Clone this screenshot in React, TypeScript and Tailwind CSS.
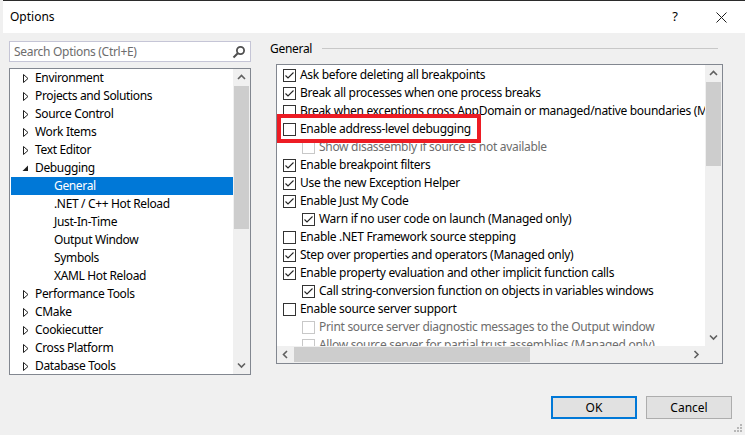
import React from "react";

const FONT = { fontFamily: '"Noto Sans", "Liberation Sans", sans-serif' };

type TreeItem = { label: string; level: 0 | 1; arrow?: "closed" | "open"; selected?: boolean };

const TREE: TreeItem[] = [
  { label: "Environment", level: 0, arrow: "closed" },
  { label: "Projects and Solutions", level: 0, arrow: "closed" },
  { label: "Source Control", level: 0, arrow: "closed" },
  { label: "Work Items", level: 0, arrow: "closed" },
  { label: "Text Editor", level: 0, arrow: "closed" },
  { label: "Debugging", level: 0, arrow: "open" },
  { label: "General", level: 1, selected: true },
  { label: ".NET / C++ Hot Reload", level: 1 },
  { label: "Just-In-Time", level: 1 },
  { label: "Output Window", level: 1 },
  { label: "Symbols", level: 1 },
  { label: "XAML Hot Reload", level: 1 },
  { label: "Performance Tools", level: 0, arrow: "closed" },
  { label: "CMake", level: 0, arrow: "closed" },
  { label: "Cookiecutter", level: 0, arrow: "closed" },
  { label: "Cross Platform", level: 0, arrow: "closed" },
  { label: "Database Tools", level: 0, arrow: "closed" },
];

type Opt = { label: string; checked: boolean; indent?: boolean; disabled?: boolean };

const OPTIONS: Opt[] = [
  { label: "Ask before deleting all breakpoints", checked: true },
  { label: "Break all processes when one process breaks", checked: true },
  { label: "Break when exceptions cross AppDomain or managed/native boundaries (Managed only)", checked: false },
  { label: "Enable address-level debugging", checked: false },
  { label: "Show disassembly if source is not available", checked: false, indent: true, disabled: true },
  { label: "Enable breakpoint filters", checked: true },
  { label: "Use the new Exception Helper", checked: true },
  { label: "Enable Just My Code", checked: true },
  { label: "Warn if no user code on launch (Managed only)", checked: true, indent: true },
  { label: "Enable .NET Framework source stepping", checked: false },
  { label: "Step over properties and operators (Managed only)", checked: true },
  { label: "Enable property evaluation and other implicit function calls", checked: true },
  { label: "Call string-conversion function on objects in variables windows", checked: true, indent: true },
  { label: "Enable source server support", checked: false },
  { label: "Print source server diagnostic messages to the Output window", checked: false, indent: true, disabled: true },
  { label: "Allow source server for partial trust assemblies (Managed only)", checked: false, indent: true, disabled: true },
];

function Chevron({ dir }: { dir: "up" | "down" | "left" | "right" }) {
  const pts = {
    up: "1,5 4.5,1.5 8,5",
    down: "1,1.5 4.5,5 8,1.5",
    left: "5,1 1.5,4.5 5,8",
    right: "1.5,1 5,4.5 1.5,8",
  }[dir];
  const size = dir === "up" || dir === "down" ? { w: 9, h: 7 } : { w: 7, h: 9 };
  return (
    <svg width={size.w} height={size.h} viewBox={`0 0 ${size.w} ${size.h}`}>
      <polyline points={pts} fill="none" stroke="#606060" strokeWidth="1.6" />
    </svg>
  );
}

function TreeArrow({ kind }: { kind: "closed" | "open" }) {
  if (kind === "open") {
    return (
      <svg width="7" height="7" viewBox="0 0 7 7">
        <polygon points="6,0.5 6,6 0.5,6" fill="#1e1e1e" />
      </svg>
    );
  }
  return (
    <svg width="6" height="9" viewBox="0 0 6 9">
      <polygon points="0.5,0.5 5,4.5 0.5,8.5" fill="none" stroke="#1e1e1e" strokeWidth="1" />
    </svg>
  );
}

function CheckBox({ checked, disabled }: { checked: boolean; disabled?: boolean }) {
  return (
    <div
      className={`w-[13px] h-[13px] shrink-0 bg-white border flex items-center justify-center ${
        disabled ? "border-[#c8c8c8]" : "border-[#333333]"
      }`}
    >
      {checked && (
        <svg width="11" height="11" viewBox="0 0 11 11">
          <polyline points="1.5,5.5 4,8 9.5,2.5" fill="none" stroke="#222222" strokeWidth="1.1" />
        </svg>
      )}
    </div>
  );
}

function Tree() {
  return (
    <div className="mt-[6px] h-[307px] border border-[#828790] bg-white flex">
      <div className="flex-1 flex flex-col pl-[1px]">
        {TREE.map((t) => (
          <div
            key={t.label}
            className={`h-[18px] shrink-0 flex items-center text-[12px] tracking-[-0.35px] ${
              t.selected ? "bg-[#0078d7] text-white" : "text-black"
            }`}
          >
            <div className="w-[24px] flex items-center justify-end pr-[6px]">
              {t.arrow && <TreeArrow kind={t.arrow} />}
            </div>
            <span className={`whitespace-nowrap ${t.level === 1 ? "pl-[19px]" : ""}`}>{t.label}</span>
          </div>
        ))}
      </div>
      <div className="w-[17px] bg-[#f0f0f0] flex flex-col">
        <div className="h-[17px] flex items-center justify-center">
          <Chevron dir="up" />
        </div>
        <div className="h-[143px] mx-[1px] bg-[#cdcdcd]" />
        <div className="flex-1" />
        <div className="h-[17px] flex items-center justify-center">
          <Chevron dir="down" />
        </div>
      </div>
    </div>
  );
}

function OptionsList() {
  return (
    <div className="relative ml-[6px] w-[447px] h-[300px] border border-[#828790] bg-white flex flex-col">
      <div className="flex-1 flex min-h-0">
        <div className="flex-1 overflow-hidden flex flex-col pt-[1px]">
          {OPTIONS.map((o) => (
            <div
              key={o.label}
              className={`h-[18px] shrink-0 flex items-center gap-[4px] text-[12px] tracking-[-0.3px] whitespace-nowrap ${
                o.indent ? "pl-[25px]" : "pl-[6px]"
              } ${o.disabled ? "text-[#6d6d6d]" : "text-black"}`}
            >
              <CheckBox checked={o.checked} disabled={o.disabled} />
              <span>{o.label}</span>
            </div>
          ))}
        </div>
        <div className="w-[17px] bg-[#f0f0f0] flex flex-col">
          <div className="h-[17px] flex items-center justify-center">
            <Chevron dir="up" />
          </div>
          <div className="h-[84px] mx-[1px] bg-[#cdcdcd]" />
          <div className="flex-1" />
          <div className="h-[17px] flex items-center justify-center">
            <Chevron dir="down" />
          </div>
        </div>
      </div>
      <div className="h-[17px] shrink-0 flex bg-[#f0f0f0]">
        <div className="w-[17px] flex items-center justify-center">
          <Chevron dir="left" />
        </div>
        <div className="w-[236px] my-[1px] bg-[#cdcdcd]" />
        <div className="flex-1" />
        <div className="w-[17px] flex items-center justify-center">
          <Chevron dir="right" />
        </div>
        <div className="w-[17px]" />
      </div>
      {/* red annotation box */}
      <div className="absolute left-0 top-[49px] w-[204px] h-[29px] border-[4px] border-[#ed1c24] pointer-events-none" />
    </div>
  );
}

export default function App() {
  return (
    <div className="w-[745px] h-[435px] bg-[#f0f0f0] overflow-hidden flex flex-col relative" style={FONT}>
      <div className="h-[33px] shrink-0 ml-[3px] bg-white border-t border-[#2b2b2b] flex items-center">
        <span className="pl-[7px] text-[12px] text-black">Options</span>
        <div className="flex-1" />
        <span className="text-[13px] text-black mr-[38px]">?</span>
        <svg width="11" height="11" viewBox="0 0 11 11" className="mr-[18px]">
          <line x1="0.5" y1="0.5" x2="10.5" y2="10.5" stroke="#1e1e1e" strokeWidth="1" />
          <line x1="10.5" y1="0.5" x2="0.5" y2="10.5" stroke="#1e1e1e" strokeWidth="1" />
        </svg>
      </div>

      <div className="flex pt-[8px] h-[342px] shrink-0">
        <div className="ml-[9px] w-[242px] flex flex-col">
          <div className="h-[21px] border border-[#c5c5d6] bg-white flex items-center pl-[4px] pr-[4px]">
            <span className="flex-1 text-[12px] tracking-[-0.3px] text-[#6d6d6d] whitespace-nowrap">
              Search Options (Ctrl+E)
            </span>
            <svg width="14" height="14" viewBox="0 0 14 14">
              <circle cx="8.5" cy="5.5" r="3.6" fill="none" stroke="#505050" strokeWidth="1.8" />
              <line x1="5.8" y1="8.2" x2="1.5" y2="12.5" stroke="#505050" strokeWidth="2" />
            </svg>
          </div>
          <Tree />
        </div>

        <div className="ml-[19px] flex flex-col">
          <div className="h-[15px] flex items-center">
            <span className="text-[12px] tracking-[-0.3px] text-black">General</span>
            <div className="ml-[10px] w-[396px] h-[1px] bg-[#c8c8c8]" />
          </div>
          <div className="mt-[8px]">
            <OptionsList />
          </div>
        </div>
      </div>

      <div className="flex justify-end pr-[13px] mt-[21px] gap-[9px]">
        <button className="w-[86px] h-[23px] bg-[#e1e1e1] border-2 border-[#0078d7] text-[12px] text-black flex items-center justify-center">
          OK
        </button>
        <button className="w-[86px] h-[23px] bg-[#e1e1e1] border border-[#adadad] text-[12px] text-black flex items-center justify-center">
          Cancel
        </button>
      </div>

      <svg width="10" height="10" viewBox="0 0 10 10" className="absolute right-[2px] bottom-[2px]">
        <rect x="7" y="1" width="2" height="2" fill="#b8b8b8" />
        <rect x="4" y="4" width="2" height="2" fill="#b8b8b8" />
        <rect x="7" y="4" width="2" height="2" fill="#b8b8b8" />
        <rect x="1" y="7" width="2" height="2" fill="#b8b8b8" />
        <rect x="4" y="7" width="2" height="2" fill="#b8b8b8" />
        <rect x="7" y="7" width="2" height="2" fill="#b8b8b8" />
      </svg>
    </div>
  );
}
